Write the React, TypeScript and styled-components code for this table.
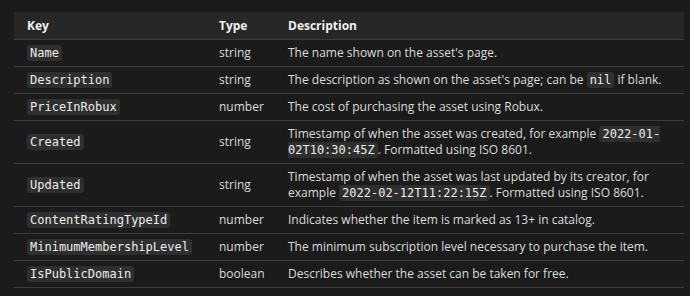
import React from 'react';
import styled, { createGlobalStyle } from 'styled-components';

interface IRow {
    name: string;
    type: string;
    description: React.ReactNode;
}

const GlobalStyle = createGlobalStyle`
    body {
        margin: 0;
        background: #1b1b1b;
        font-family: 'Open Sans', 'Noto Sans', sans-serif;
        color: #dcdcdc;
    }
`;

const StyledPage = styled.div`
    padding: 12px 6px 10px 14px;
`;

const StyledTable = styled.table`
    width: 100%;
    table-layout: fixed;
    border-collapse: collapse;
    font-size: 12px;
    line-height: 16px;
`;

const StyledHeadCell = styled.th`
    background: #272727;
    color: #f2f2f2;
    font-weight: 700;
    text-align: left;
    padding: 6px 13px 5px;
    border-bottom: 1px solid #3c3c3c;
`;

const StyledCell = styled.td<{ $tall?: boolean }>`
    padding: 5px 13px ${props => (props.$tall ? '6px' : '5px')};
    border-bottom: 1px solid #3c3c3c;
    vertical-align: middle;
`;

const StyledCode = styled.code`
    font-family: 'DejaVu Sans Mono', 'Liberation Mono', monospace;
    font-size: 12px;
    line-height: 14px;
    color: #ededed;
    background: #2f2f2f;
    border-radius: 3px;
    padding: 1px 3px;
`;

const rows: IRow[] = [
    { name: 'Name', type: 'string', description: "The name shown on the asset's page." },
    {
        name: 'Description',
        type: 'string',
        description: (
            <>
                The description as shown on the asset's page; can be <StyledCode>nil</StyledCode> if blank.
            </>
        ),
    },
    { name: 'PriceInRobux', type: 'number', description: 'The cost of purchasing the asset using Robux.' },
    {
        name: 'Created',
        type: 'string',
        description: (
            <>
                Timestamp of when the asset was created, for example <StyledCode>2022-01-02T10:30:45Z</StyledCode>.
                Formatted using ISO 8601.
            </>
        ),
    },
    {
        name: 'Updated',
        type: 'string',
        description: (
            <>
                Timestamp of when the asset was last updated by its creator, for example{' '}
                <StyledCode>2022-02-12T11:22:15Z</StyledCode>. Formatted using ISO 8601.
            </>
        ),
    },
    { name: 'ContentRatingTypeId', type: 'number', description: 'Indicates whether the item is marked as 13+ in catalog.' },
    {
        name: 'MinimumMembershipLevel',
        type: 'number',
        description: 'The minimum subscription level necessary to purchase the item.',
    },
    { name: 'IsPublicDomain', type: 'boolean', description: 'Describes whether the asset can be taken for free.' },
];

const App: React.FC = () => (
    <StyledPage>
        <GlobalStyle />
        <StyledTable>
            <colgroup>
                <col style={{ width: 192 }} />
                <col style={{ width: 69 }} />
                <col />
            </colgroup>
            <thead>
                <tr>
                    <StyledHeadCell>Key</StyledHeadCell>
                    <StyledHeadCell>Type</StyledHeadCell>
                    <StyledHeadCell>Description</StyledHeadCell>
                </tr>
            </thead>
            <tbody>
                {rows.map(row => (
                    <tr key={row.name}>
                        <StyledCell>
                            <StyledCode>{row.name}</StyledCode>
                        </StyledCell>
                        <StyledCell>{row.type}</StyledCell>
                        <StyledCell>{row.description}</StyledCell>
                    </tr>
                ))}
            </tbody>
        </StyledTable>
    </StyledPage>
);

export default App;
